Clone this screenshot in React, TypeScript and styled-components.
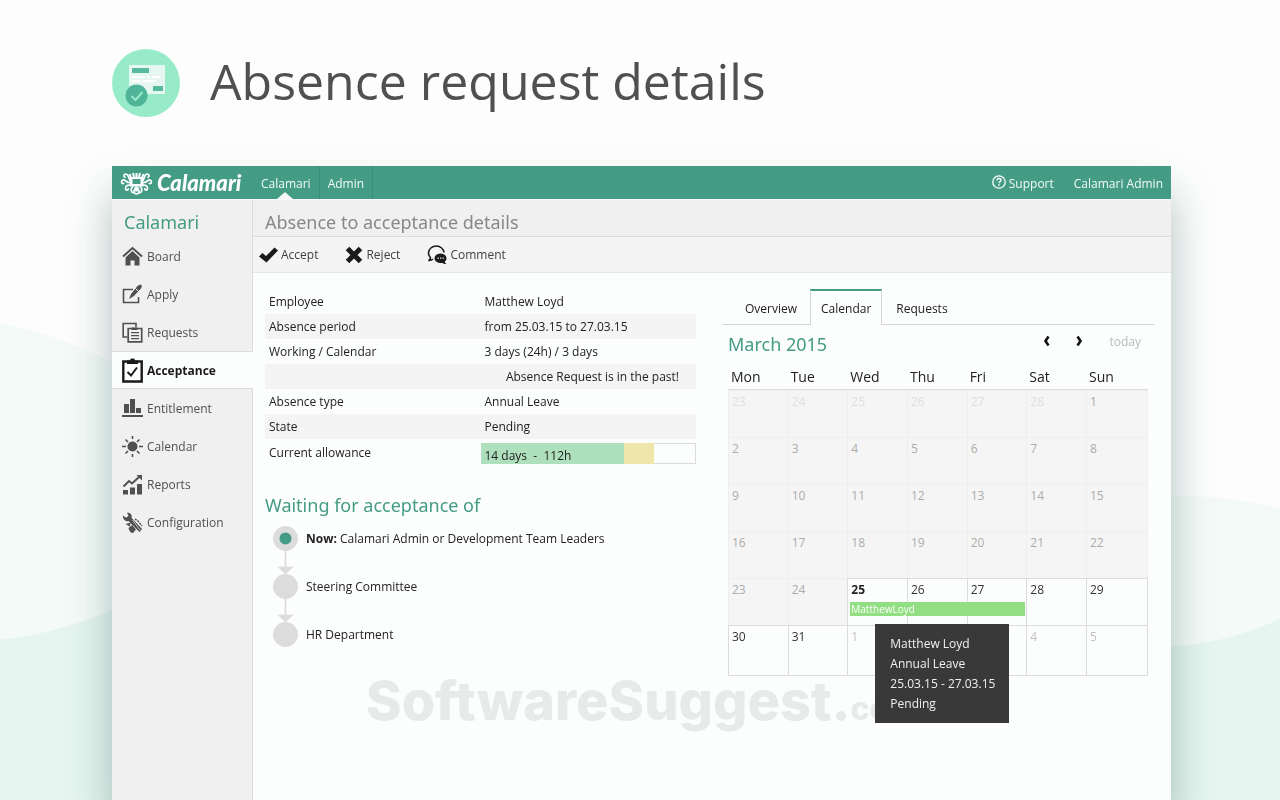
import React from "react";
import styled, { createGlobalStyle, css } from "styled-components";

const green = "#459c84";
const line = "#dcdcdc";

const GlobalStyle = createGlobalStyle`
  *, *::before, *::after { box-sizing: border-box; }
  body {
    margin: 0;
    background: #fdfdfd;
    color: #222;
    font: 12px/20px "Open Sans", "Noto Sans", sans-serif;
  }
  button { font: inherit; color: inherit; border: 0; background: none; padding: 0; cursor: pointer; }
  a { color: inherit; text-decoration: none; }
  h1, h2, h3 { margin: 0; font-weight: 400; }
`;

const Page = styled.div`
  min-height: 100vh;
  display: flex;
  flex-direction: column;
  padding: 0 109px 0 112px;
  overflow: hidden;
`;

const Backdrop = styled.svg`
  position: fixed;
  inset: 0;
  width: 100%;
  height: 100%;
  z-index: -1;
`;

const Hero = styled.header`
  display: flex;
  align-items: center;
  gap: 30px;
  height: 166px;
`;

const HeroTitle = styled.h1`
  padding-bottom: 4px;
  color: #505050;
  font-size: 50px;
  line-height: 64px;
  white-space: nowrap;
`;

const AppWindow = styled.div`
  position: relative;
  flex: 1;
  display: flex;
  flex-direction: column;
  background: #fcfdfd;
  box-shadow: 0 28px 40px rgba(40, 90, 80, 0.36);
`;

const TopBar = styled.div`
  display: flex;
  align-items: stretch;
  height: 33px;
  background: ${green};
  color: #f2faf7;
`;

const Brand = styled.a`
  display: flex;
  align-items: center;
  gap: 4px;
  width: 141px;
  padding-left: 8px;
  color: #fff;
  font: italic 900 22px/32px Lato, sans-serif;
`;

const NavLink = styled.a<{ $active?: boolean }>`
  position: relative;
  padding: 8px 8px 0 8px;
  border-right: 1px solid #3b8e77;
  ${(p) =>
    p.$active &&
    css`
      &::after {
        content: "";
        position: absolute;
        left: 50%;
        bottom: 0;
        margin-left: -9px;
        border: solid transparent;
        border-width: 0 8px 7px;
        border-bottom-color: #f7f7f7;
      }
    `}
`;

const Account = styled.div`
  display: flex;
  gap: 20px;
  margin-left: auto;
  padding: 8px 8px 0 0;
`;

const AccountLink = styled.a`
  display: flex;
  gap: 3px;
`;

const Body = styled.div`
  flex: 1;
  display: flex;
  border-top: 1px solid #fafafa;
`;

const Sidebar = styled.nav`
  flex: none;
  width: 141px;
  background: #f0f0f0;
  border-right: 1px solid ${line};
`;

const Heading = styled.h2`
  font-family: "Noto Sans", "Open Sans", sans-serif;
  font-size: 18px;
  line-height: 26px;
`;

const SidebarTitle = styled(Heading)`
  height: 37px;
  padding: 9px 0 0 12px;
  color: ${green};
`;

const SidebarItem = styled.a<{ $active?: boolean }>`
  display: flex;
  align-items: center;
  gap: 4px;
  height: 38px;
  padding: 1px 0 0 10px;
  color: #505050;
  ${(p) =>
    p.$active &&
    css`
      margin-right: -1px;
      border: solid ${line};
      border-width: 1px 0;
      background: #fcfdfd;
      color: #1a1a1a;
      font-weight: 700;
    `}
`;

const Main = styled.main`
  flex: 1;
  min-width: 0;
`;

const MainTitle = styled(Heading)`
  height: 37px;
  padding: 9px 0 0 12px;
  background: #f0f0f0;
  border-bottom: 1px solid ${line};
  color: #888;
`;

const Toolbar = styled.div`
  display: flex;
  align-items: center;
  gap: 27px;
  height: 36px;
  padding: 1px 0 0 6px;
  background: #f4f4f4;
  border-bottom: 1px solid #e4e4e4;
  color: #404040;
`;

const ToolButton = styled.button`
  display: flex;
  align-items: center;
  gap: 3px;
`;

const Columns = styled.div`
  display: grid;
  grid-template-columns: 1fr 1fr;
  gap: 27px;
  padding: 16px 17px 0 12px;
`;

const Details = styled.table`
  width: 100%;
  border-collapse: collapse;
  table-layout: fixed;
  th, td {
    height: 25px;
    padding: 0 4px;
    font-weight: 400;
    text-align: left;
  }
  tr:nth-child(even) { background: #f4f4f4; }
`;

const NoticeCell = styled.td`
  && {
    padding-right: 17px;
    text-align: right;
  }
`;

const AllowanceCell = styled.td`
  && {
    height: 28px;
    padding: 0;
  }
`;

const Allowance = styled.div`
  display: flex;
  height: 21px;
  border: 1px solid ${line};
  border-left: 0;
`;

const Share = styled.span<{ $tone: string }>`
  margin: -1px 0;
  padding: 3px 0 0 4px;
  line-height: 20px;
  white-space: pre;
  background: ${(p) => p.$tone};
`;

const SectionTitle = styled(Heading)`
  color: ${green};
`;

const Waiting = styled.section`
  margin-top: 25px;
`;

const Steps = styled.ol`
  margin: 8px 0 0;
  padding: 0 0 0 8px;
  list-style: none;
`;

const Step = styled.li`
  display: flex;
  gap: 8px;
  height: 48px;
  line-height: 26px;
`;

const StepMark = styled.svg`
  flex: none;
`;

const Tabs = styled.div`
  display: flex;
  height: 36px;
  padding-left: 12px;
  border-bottom: 1px solid #d4d4d4;
`;

const Tab = styled.button<{ $active?: boolean }>`
  padding: 4px 10px 0;
  ${(p) =>
    p.$active &&
    css`
      margin: 0 4px 0 3px;
      height: 36px;
      padding: 2px 10px 0;
      border: 1px solid #d4d4d4;
      border-top: 2px solid ${green};
      border-bottom: 0;
      background: #fcfdfd;
    `}
`;

const CalendarPanel = styled.div`
  padding: 5px 6px 0 5px;
`;

const CalendarHead = styled.div`
  display: flex;
  align-items: center;
  height: 28px;
`;

const CalendarNav = styled.div`
  display: flex;
  align-items: center;
  gap: 26px;
  margin-left: auto;
  padding: 0 7px 4px 0;
`;

const TodayButton = styled.button`
  color: #b8bcbb;
`;

const Month = styled.table`
  width: 100%;
  margin-top: 7px;
  table-layout: fixed;
  border-collapse: separate;
  border-spacing: 0;
  th {
    height: 25px;
    padding: 0 3px;
    border-bottom: 1px solid ${line};
    font-size: 14px;
    font-weight: 400;
    text-align: left;
  }
  th:last-child { width: 62px; }
  tbody tr:last-child td { height: 51px; border-bottom: 1px solid ${line}; }
`;

type DayKind = "faint" | "past" | "today" | "open" | "next";

const dayText: Record<DayKind, string> = {
  faint: "#dfdfdf",
  past: "#acacac",
  today: "#222",
  open: "#333",
  next: "#c0c0c0",
};

const Day = styled.td<{ $kind: DayKind }>`
  position: relative;
  height: 47px;
  padding: 1px 2px 0 3px;
  vertical-align: top;
  border: 0 solid ${line};
  border-width: 1px 0 0 1px;
  color: ${(p) => dayText[p.$kind]};
  font-weight: ${(p) => (p.$kind === "today" ? 700 : 400)};
  &:last-child { border-right-width: 1px; }
  ${(p) =>
    (p.$kind === "faint" || p.$kind === "past") &&
    css`
      && { border-color: #eeeeee; }
      background: #f5f5f5;
    `}
`;

const LeaveBar = styled.div`
  position: absolute;
  z-index: 2;
  left: 2px;
  top: 23px;
  width: 300%;
  border-right: 1px solid transparent;
  background: #92de82;
  background-clip: padding-box;
  color: #fff;
  padding-left: 1px;
  font-size: 10px;
  font-weight: 400;
  line-height: 14px;
`;

const Tooltip = styled.div`
  position: absolute;
  left: 25px;
  top: 22px;
  padding: 10px 14px 9px 15px;
  background: rgba(46, 46, 46, 0.95);
  color: #f0f0f0;
  font-size: 12px;
  line-height: 20px;
  white-space: nowrap;
`;

const Watermark = styled.div`
  position: absolute;
  z-index: 1;
  left: 254px;
  top: 503px;
  color: #e8eaea;
  font: 800 54px/64px Inter, sans-serif;
  pointer-events: none;
  small { font-size: 32px; }
`;

const Icon = ({ children, size = 21 }: { children: React.ReactNode; size?: number }) => (
  <svg width={size} height={size} viewBox="0 0 21 21" fill="currentColor" aria-hidden="true">
    {children}
  </svg>
);

const stroke = { fill: "none", stroke: "currentColor" } as const;

const icons = {
  board: (
    <Icon>
      <path d="M1 10.500 10.500 2 20 10.500" {...stroke} strokeWidth="2" />
      <path d="M10.500 5 17.500 11.500v8h-5v-5h-4v5h-5v-8z" />
    </Icon>
  ),
  apply: (
    <Icon>
      <path d="M11 5.500H1.500v13h15V13" {...stroke} strokeWidth="1.600" />
      <path d="M7 15l2-5 6-7.500c1.500-1.500 3-2 4.500-1.500.8 1.500 0 3-1.500 4.500L12 12z" />
      <path d="M13.500 4.500l3 3" stroke="#f0f0f0" />
    </Icon>
  ),
  requests: (
    <Icon>
      <path d="M5.500 15H1.200V1.500H14V5" {...stroke} strokeWidth="1.600" />
      <path d="M6.200 6.500h13.500v13.300H6.200z" {...stroke} strokeWidth="1.700" />
      <path d="M9.500 5.500h6v2.500h-6zM9 10h8v1.200H9zM9 13h8v1.200H9zM9 16h8v1.200H9z" />
    </Icon>
  ),
  acceptance: (
    <svg width="21" height="25" viewBox="0 0 21 25" fill="currentColor" aria-hidden="true">
      <path d="M1.300 3.500h18.400v20H1.300z" {...stroke} strokeWidth="2.400" />
      <path d="M5 2.500h3C8 1 9 .5 10.500.5S13 1 13 2.500h3V6H5z" />
      <path d="M5.500 14l3.500 3.500 6-8" {...stroke} strokeWidth="2" />
    </svg>
  ),
  entitlement: (
    <Icon>
      <path d="M2 6h5v9H2zM8 1h5v14H8zM14 10h5v5h-5zM0 17h21v2H0z" />
    </Icon>
  ),
  calendar: (
    <Icon>
      <circle cx="10.500" cy="10.500" r="5" />
      <path
        d="M10.500 0v3M10.500 18v3M0 10.500h4M17 10.500h4M3.500 3.500 6 6M15 15l2.500 2.500M17.500 3.500 15 6M6 15l-2.500 2.500"
        {...stroke}
        strokeWidth="1.600"
      />
    </Icon>
  ),
  reports: (
    <Icon>
      <path d="M1 16h5v4.500H1zM8 13.500h5v7H8zM15 10h5v10.500h-5z" />
      <path d="M1.500 12.500 7 7l3 2.500 7.500-7" {...stroke} strokeWidth="2" />
      <path d="M14.500 1H20v5.500z" />
    </Icon>
  ),
  configuration: (
    <Icon>
      <path d="M1 3.500l3 2.200L6.500 4 5 .8c3-.8 5.500 2 4.500 5L20 17l-2.500 3L6.500 9C3.500 10 .5 7 1 3.500z" />
      <path d="M9 10.500 3.500 12l4 2.500zM6.500 16l3.500-3 4 4.500-3 3.500c-2 0-4-2-4.500-5z" />
      <path d="M10.500 8l7.500 10M12.500 7.500l6 6.500" stroke="#f0f0f0" strokeWidth=".7" />
      <path d="M13 7l3 2 4 5" {...stroke} strokeWidth="1.500" strokeDasharray="2 1" />
    </Icon>
  ),
};

const sidebar: { label: string; icon: keyof typeof icons }[] = [
  { label: "Board", icon: "board" },
  { label: "Apply", icon: "apply" },
  { label: "Requests", icon: "requests" },
  { label: "Acceptance", icon: "acceptance" },
  { label: "Entitlement", icon: "entitlement" },
  { label: "Calendar", icon: "calendar" },
  { label: "Reports", icon: "reports" },
  { label: "Configuration", icon: "configuration" },
];

const AcceptIcon = () => (
  <svg width="19" height="16" viewBox="0 0 19 16" fill="#1a1a1a" aria-hidden="true">
    <path d="M0 9.500 3.500 6l3.500 3L15.500.5 19 3.500 7.500 15.500z" />
  </svg>
);

const RejectIcon = () => (
  <svg width="18" height="18" viewBox="0 0 18 18" aria-hidden="true">
    <path d="M2.500 2.500l13 13M15.500 2.500l-13 13" stroke="#1a1a1a" strokeWidth="5" />
  </svg>
);

const CommentIcon = () => (
  <svg width="20" height="20" viewBox="0 0 20 20" fill="#1a1a1a" aria-hidden="true">
    <path
      d="M17 7.500C16.500 3.500 13 1 9.500 1 5 1 1.500 4 1.500 8c0 2 .8 3.500 2 4.500 0 1.300-.8 2.500-2 3 2 .2 3.500-.5 4.500-1.500"
      fill="none"
      stroke="#1a1a1a"
      strokeWidth="1.600"
    />
    <path d="M13.500 8.500c3.500 0 6 2.200 6 4.700 0 1.500-.8 2.600-1.700 3.400 0 1 .5 1.800 1.700 2.400-1.700.2-3-.3-4-1.100-4.500.5-8-1.700-8-4.700 0-2.500 2.500-4.700 6-4.700z" />
    <path d="M10.500 12.500h1.300v1.300h-1.300zM13 12.500h1.300v1.300H13zM15.500 12.500h1.300v1.300h-1.300z" fill="#f4f4f4" />
  </svg>
);

const BrandMark = () => (
  <svg width="33" height="24" viewBox="0 0 33 24" fill="none" stroke="#fff" aria-hidden="true">
    <path d="M9.500 6h14v9.500h-14z" fill="#fff" stroke="none" />
    <path d="M12.500 8h8v5h-8z" fill={green} stroke="none" />
    <path d="M11 7 9.500 3M14 6l-1-4M19 6l1-4M22 7l1.500-4M16.500 6V2" strokeWidth="2" />
    <g strokeWidth="1.700" strokeLinecap="round">
      <path d="M10 9C8 7 9 3.500 6 3c-2-.2-3 2.500-1 3.200M9 11.500C6 11 5 8.500 3 9c-2 .5-2 4 .7 3.500M10 14c-3 0-4.500 1-4.500 3.500 0 2 2.500 2 2.800.3" />
      <path d="M23 9c2-2 1-5.500 4-6 2-.2 3 2.500 1 3.200M24 11.500c3-.5 4-3 6-2.500 2 .5 2 4-.7 3.500M23 14c3 0 4.500 1 4.500 3.500 0 2-2.500 2-2.800.3" />
      <path d="M12.500 16c-2 2-1.500 4.500 0 5.500 1.500.5 2-1 1.500-2M20.500 16c2 2 1.500 4.500 0 5.500-1.500.5-2-1-1.500-2M14.500 22c1 1.200 3 1.200 4 0" />
    </g>
    <circle cx="16.500" cy="18" r="2.500" fill="#fff" stroke="none" />
  </svg>
);

const HeroIcon = () => (
  <svg width="68" height="68" viewBox="0 0 68 68" aria-hidden="true">
    <circle cx="34" cy="34" r="34" fill="#98ebc8" />
    <path d="M17 16h36v29H17z" fill="#e6f6f0" />
    <path d="M20 19h17v5H20zM41 37h10v5H41z" fill="#56ba9e" />
    <path d="M20 28h13M35 28h3M40 28h8M20 32h8M31 32h12" stroke="#fff" strokeWidth="2" />
    <circle cx="24.500" cy="46.500" r="11" fill="#50b499" />
    <path d="M19.500 47l4 4 7-8" fill="none" stroke="#98ebc8" strokeWidth="2" />
  </svg>
);

const HelpIcon = () => (
  <svg width="14" height="16" viewBox="0 -1 14 16" fill="none" stroke="#fff" aria-hidden="true">
    <circle cx="7" cy="7" r="6.200" strokeWidth="1.300" />
    <path d="M5 5.500C5 4.200 5.900 3.500 7 3.500s2 .7 2 1.800C9 6.600 7 6.700 7 8.300" strokeWidth="1.300" />
    <path d="M7 9.300v1.500" strokeWidth="1.500" />
  </svg>
);

const Chevron = ({ back }: { back?: boolean }) => (
  <svg width="7" height="10" viewBox="0 0 7 10" fill="none" stroke="#111" strokeWidth="2.600" aria-hidden="true">
    <path d={back ? "M5.500 .5 2.500 5l3 4.500" : "M1.500 .5 4.500 5l-3 4.500"} />
  </svg>
);

const Marker = ({ current, last }: { current?: boolean; last?: boolean }) => (
  <StepMark width="25" height="48" viewBox="0 0 25 48" aria-hidden="true">
    <circle cx="12.500" cy="12.500" r="12.500" fill="#dcdcdc" />
    {current && <circle cx="12.500" cy="12.500" r="6" fill={green} />}
    {!last && <path d="M12 24h1v17h7l-7.500 7L5 41h7z" fill="#dcdcdc" stroke="#dcdcdc" strokeWidth=".6" />}
  </StepMark>
);

const weekdays = ["Mon", "Tue", "Wed", "Thu", "Fri", "Sat", "Sun"];

const kindOf = (index: number): DayKind => {
  if (index < 6) return "faint";
  if (index < 30) return "past";
  if (index === 30) return "today";
  return index < 37 ? "open" : "next";
};

const dayNumber = (index: number) => {
  if (index < 6) return 23 + index;
  return index < 37 ? index - 5 : index - 36;
};

const weeks = Array.from({ length: 6 }, (_, w) => Array.from({ length: 7 }, (_, d) => w * 7 + d));

export default function App() {
  return (
    <Page>
      <GlobalStyle />
      <Backdrop viewBox="0 0 1280 800" preserveAspectRatio="none" aria-hidden="true">
        <path d="M0 323Q56 334 112 362L1171 496Q1226 495 1280 508V800H0z" fill="#f4faf8" />
        <path d="M0 639Q50 636 112 610L1171 647Q1226 643 1280 619V800H0z" fill="#e6f5f0" />
      </Backdrop>
      <Hero>
        <HeroIcon />
        <HeroTitle>Absence request details</HeroTitle>
      </Hero>
      <AppWindow>
        <TopBar>
          <Brand href="#">
            <BrandMark />
            Calamari
          </Brand>
          <NavLink href="#calamari" $active>Calamari</NavLink>
          <NavLink href="#admin">Admin</NavLink>
          <Account>
            <AccountLink href="#support">
              <HelpIcon />
              Support
            </AccountLink>
            <AccountLink href="#account">Calamari Admin</AccountLink>
          </Account>
        </TopBar>
        <Body>
          <Sidebar>
            <SidebarTitle>Calamari</SidebarTitle>
            {sidebar.map(({ label, icon }) => (
              <SidebarItem key={label} href="#" $active={label === "Acceptance"}>
                {icons[icon]}
                {label}
              </SidebarItem>
            ))}
          </Sidebar>
          <Main>
            <MainTitle>Absence to acceptance details</MainTitle>
            <Toolbar>
              <ToolButton><AcceptIcon />Accept</ToolButton>
              <ToolButton><RejectIcon />Reject</ToolButton>
              <ToolButton><CommentIcon />Comment</ToolButton>
            </Toolbar>
            <Columns>
              <div>
                <Details>
                  <tbody>
                    <tr><th scope="row">Employee</th><td>Matthew Loyd</td></tr>
                    <tr><th scope="row">Absence period</th><td>from 25.03.15 to 27.03.15</td></tr>
                    <tr><th scope="row">Working / Calendar</th><td>3 days (24h) / 3 days</td></tr>
                    <tr><NoticeCell colSpan={2}>Absence Request is in the past!</NoticeCell></tr>
                    <tr><th scope="row">Absence type</th><td>Annual Leave</td></tr>
                    <tr><th scope="row">State</th><td>Pending</td></tr>
                    <tr>
                      <th scope="row">Current allowance</th>
                      <AllowanceCell>
                        <Allowance>
                          <Share $tone="#aee0bd" style={{ width: "67%" }}>{"14 days  -  112h"}</Share>
                          <Share $tone="#efe7a9" style={{ width: "14%" }} />
                        </Allowance>
                      </AllowanceCell>
                    </tr>
                  </tbody>
                </Details>
                <Waiting>
                  <SectionTitle as="h3">Waiting for acceptance of</SectionTitle>
                  <Steps>
                    <Step>
                      <Marker current />
                      <span><b>Now:</b> Calamari Admin or Development Team Leaders</span>
                    </Step>
                    <Step><Marker />Steering Committee</Step>
                    <Step><Marker last />HR Department</Step>
                  </Steps>
                </Waiting>
              </div>
              <div>
                <Tabs role="tablist">
                  <Tab role="tab">Overview</Tab>
                  <Tab role="tab" aria-selected="true" $active>Calendar</Tab>
                  <Tab role="tab">Requests</Tab>
                </Tabs>
                <CalendarPanel>
                  <CalendarHead>
                    <SectionTitle as="h3">March 2015</SectionTitle>
                    <CalendarNav>
                      <button aria-label="Previous month"><Chevron back /></button>
                      <button aria-label="Next month"><Chevron /></button>
                      <TodayButton>today</TodayButton>
                    </CalendarNav>
                  </CalendarHead>
                  <Month>
                    <thead>
                      <tr>{weekdays.map((d) => <th key={d} scope="col">{d}</th>)}</tr>
                    </thead>
                    <tbody>
                      {weeks.map((week) => (
                        <tr key={week[0]}>
                          {week.map((i) => (
                            <Day key={i} $kind={kindOf(i)}>
                              {dayNumber(i)}
                              {i === 30 && (
                                <LeaveBar>
                                  MatthewLoyd
                                  <Tooltip role="tooltip">
                                    Matthew Loyd<br />
                                    Annual Leave<br />
                                    25.03.15 - 27.03.15<br />
                                    Pending
                                  </Tooltip>
                                </LeaveBar>
                              )}
                            </Day>
                          ))}
                        </tr>
                      ))}
                    </tbody>
                  </Month>
                </CalendarPanel>
              </div>
            </Columns>
          </Main>
        </Body>
        <Watermark aria-hidden="true">SoftwareSuggest.<small>co</small></Watermark>
      </AppWindow>
    </Page>
  );
}
